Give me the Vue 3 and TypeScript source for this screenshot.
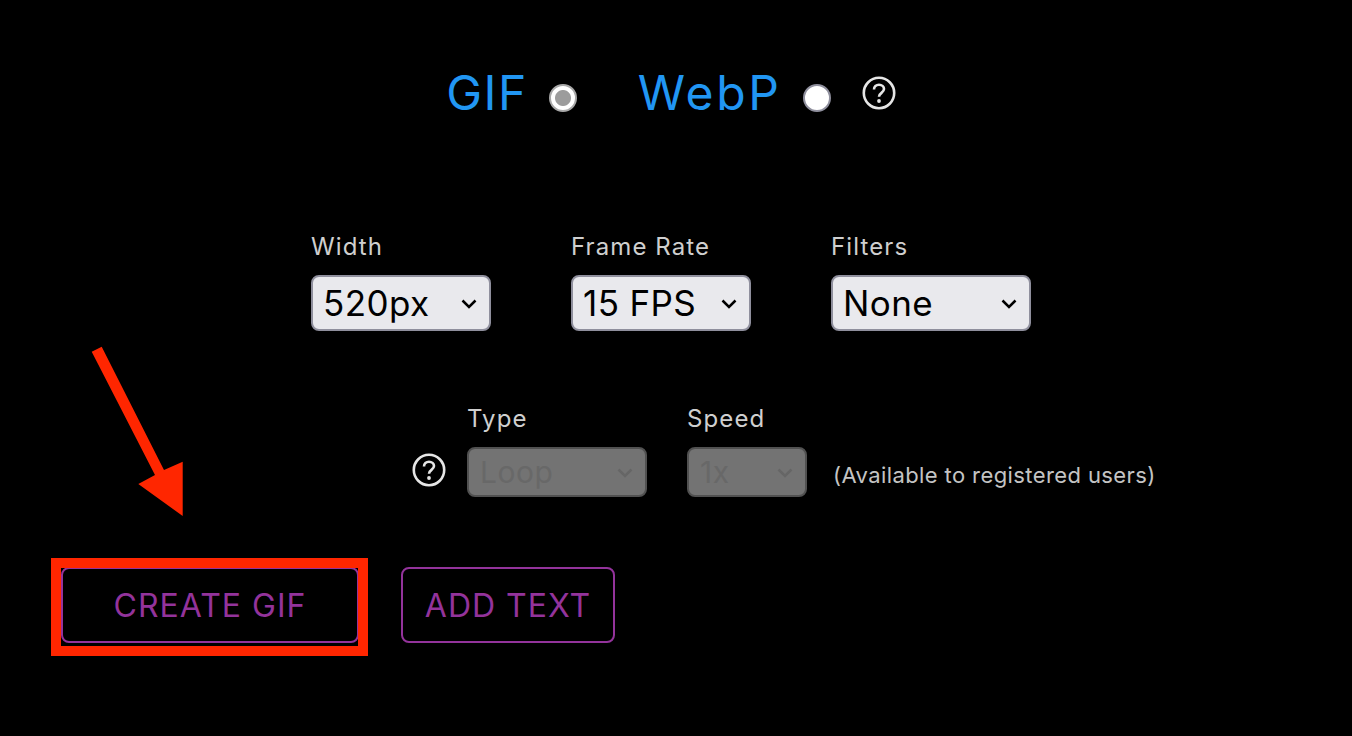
<script setup lang="ts">
interface Field { label: string; value: string; wide: string }
const mainFields: Field[] = [
  { label: 'Width', value: '520px', wide: 'w180' },
  { label: 'Frame Rate', value: '15 FPS', wide: 'w180' },
  { label: 'Filters', value: 'None', wide: 'w200' },
]
const lockedFields: Field[] = [
  { label: 'Type', value: 'Loop', wide: 'w180' },
  { label: 'Speed', value: '1x', wide: 'w120' },
]
</script>

<template>
  <main class="page">
    <section class="format">
      <label class="fmt"><span class="fmt-name gif">GIF</span><input class="radio checked" type="radio" name="fmt" checked /></label>
      <label class="fmt"><span class="fmt-name webp">WebP</span><input class="radio" type="radio" name="fmt" /></label>
      <svg class="help help-top" viewBox="0 0 34 34" width="34" height="34">
        <circle cx="17" cy="17" r="15.2" fill="none" stroke="#e6e6e6" stroke-width="2.6" />
        <path d="M12 13.6c0-3 2.2-4.800 5-4.800s5 1.800 5 4.300c0 3.800-5 3.800-5 7.600" fill="none" stroke="#e6e6e6" stroke-width="2.6" />
        <circle cx="17" cy="25" r="1.9" fill="#e6e6e6" />
      </svg>
    </section>

    <section class="fields">
      <div v-for="f in mainFields" :key="f.label" class="field">
        <span class="field-label">{{ f.label }}</span>
        <div class="select-wrap main" :class="f.wide">
          <select class="select"><option>{{ f.value }}</option></select>
          <svg class="chev" viewBox="0 0 16 10" width="16" height="10"><path d="M1.500 1.500 8 8l6.500-6.500" fill="none" stroke="#000" stroke-width="2.5" /></svg>
        </div>
      </div>
    </section>

    <section class="fields locked">
      <svg class="help help-low" viewBox="0 0 34 34" width="34" height="34">
        <circle cx="17" cy="17" r="15.2" fill="none" stroke="#e6e6e6" stroke-width="2.6" />
        <path d="M12 13.6c0-3 2.2-4.800 5-4.800s5 1.800 5 4.300c0 3.800-5 3.800-5 7.600" fill="none" stroke="#e6e6e6" stroke-width="2.6" />
        <circle cx="17" cy="25" r="1.9" fill="#e6e6e6" />
      </svg>
      <div v-for="f in lockedFields" :key="f.label" class="field">
        <span class="field-label">{{ f.label }}</span>
        <div class="select-wrap off" :class="f.wide">
          <select class="select" disabled><option>{{ f.value }}</option></select>
          <svg class="chev" viewBox="0 0 16 10" width="16" height="10"><path d="M1.500 1.500 8 8l6.500-6.500" fill="none" stroke="#666" stroke-width="2.5" /></svg>
        </div>
      </div>
      <span class="note">(Available to registered users)</span>
    </section>

    <section class="actions">
      <button class="btn create" type="button">CREATE GIF</button>
      <button class="btn text" type="button">ADD TEXT</button>
    </section>

    <svg class="arrow" viewBox="0 0 100 175" width="100" height="175">
      <path d="M1.700 6.700 11.700 1.700 74 125 92.700 116.700V171L48.300 139 65 130Z" fill="#ff2600" />
    </svg>
  </main>
</template>

<style>
html, body { margin: 0; background: #000; }
</style>

<style scoped>
.page {
  position: relative;
  box-sizing: border-box;
  width: 1352px;
  height: 736px;
  padding: 62px 10px 0 0;
  background: #000;
  font-family: "Inter", "Open Sans", sans-serif;
  overflow: hidden;
}
.format {
  display: flex;
  justify-content: center;
  align-items: flex-start;
  height: 62px;
}
.fmt { display: flex; align-items: flex-start; margin-right: 61px; }
.fmt + .fmt { margin-right: 31px; }
.fmt-name { color: #2196f3; font-size: 48px; line-height: 62px; font-weight: 400; }
.gif { letter-spacing: 1.5px; }
.webp { letter-spacing: 2.8px; }
.radio {
  appearance: none;
  box-sizing: border-box;
  width: 28px;
  height: 28px;
  margin: 22px 0 0 21px;
  border-radius: 50%;
  border: 2px solid #8f8f9d;
  background: #fff;
}
.radio.checked {
  border-color: #a8a8a8;
  background: radial-gradient(circle, #9c9c9c 0 7.5px, #fff 8.5px);
}
.help-top { margin-top: 14px; }
.fields {
  display: flex;
  gap: 80px;
  justify-content: center;
  margin-top: 107px;
}
.field { display: flex; flex-direction: column; }
.field-label { color: #cfcfcf; font-size: 24px; line-height: 32px; letter-spacing: 1.1px; }
.select-wrap { position: relative; margin-top: 12px; }
.w180 { width: 180px; }
.w200 { width: 200px; }
.w120 { width: 120px; }
.select {
  appearance: none;
  box-sizing: border-box;
  width: 100%;
  border-radius: 8px;
  font-family: inherit;
}
.main .select {
  height: 56px;
  padding: 0 0 0 10px;
  background: #e9e9ed;
  border: 2px solid #8f8f9d;
  color: #000;
  font-size: 35px;
  letter-spacing: 0.4px;
}
.off .select {
  height: 50px;
  padding: 0 0 0 11px;
  background: #737373;
  border: 2px solid #515151;
  color: #686868;
  font-size: 30px;
  letter-spacing: 0.5px;
  opacity: 1;
}
.chev { position: absolute; right: 14px; top: 50%; margin-top: -4px; pointer-events: none; }
.locked {
  justify-content: flex-start;
  gap: 0;
  margin-top: 72px;
  padding-left: 412px;
  align-items: flex-start;
}
.locked .field + .field { margin-left: 40px; }
.help-low { margin: 50px 21px 0 0; }
.note { margin: 57px 0 0 26px; color: #c4c4c4; font-size: 22px; line-height: 30px; letter-spacing: 0.4px; }
.actions {
  display: flex;
  gap: 42px;
  margin-top: 70px;
  padding-left: 61px;
}
.btn {
  position: relative;
  box-sizing: border-box;
  height: 76px;
  background: #000;
  border: 2px solid #93339b;
  border-radius: 8px;
  color: #93339b;
  font-family: inherit;
  font-size: 32px;
  font-weight: 400;
  letter-spacing: 1px;
  padding: 0;
}
.create { width: 298px; }
.create::after {
  content: "";
  position: absolute;
  left: -12px;
  top: -11px;
  width: 317px;
  height: 98px;
  box-sizing: border-box;
  border: 10px solid #ff2600;
}
.text { width: 214px; }
.arrow { position: absolute; left: 90px; top: 345px; }
</style>
